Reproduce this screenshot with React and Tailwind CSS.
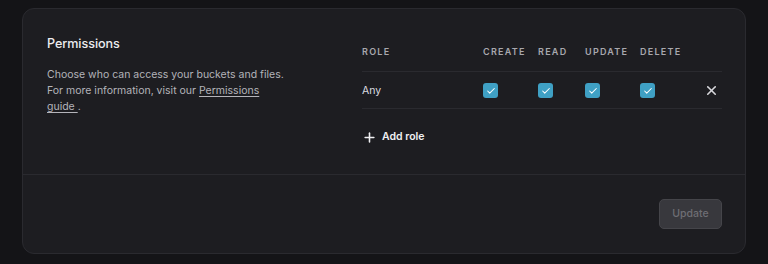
import { Plus, X, Check } from 'lucide-react'

const cols = ['CREATE', 'READ', 'UPDATE', 'DELETE']

function Box() {
  return (
    <span className="flex h-[15px] w-[15px] items-center justify-center rounded-[3px] bg-[#3fa0c4]">
      <Check size={10} strokeWidth={2.5} className="text-white" />
    </span>
  )
}

export default function App() {
  return (
    <div className="h-[264px] w-[768px] bg-[#141417] px-[22px] pt-[8px] font-['Inter',sans-serif]">
      <div className="flex h-[246px] flex-col rounded-[12px] border border-[#2a2a2f] bg-[#1d1d21]">
        <div className="flex flex-1 gap-6 border-b border-[#2a2a2f] pl-[24px] pr-[23px] pt-[23px]">
          <div className="w-[291px] pt-[2px]">
            <h2 className="text-[12.6px] font-medium leading-5 tracking-[-0.005em] text-[#ececef]">Permissions</h2>
            <p className="mt-[13px] max-w-[238px] text-[10.5px] leading-4 text-[#b4b4ba]">
              Choose who can access your buckets and files.
              <br />
              For more information, visit our{' '}
              <span className="underline underline-offset-2">Permissions</span>{' '}
              <span className="underline underline-offset-2">guide&nbsp;</span>.
            </p>
          </div>
          <div className="flex-1">
            <div className="grid h-[40px] grid-cols-[121px_55px_47px_55px_1fr_20px] items-center border-b border-[#2a2a2f] pt-[1px] text-[9px] font-semibold tracking-[0.14em] text-[#a8a8ae]">
              <span>ROLE</span>
              {cols.map(c => <span key={c}>{c}</span>)}
              <span />
            </div>
            <div className="grid h-[37px] grid-cols-[121px_55px_47px_55px_1fr_20px] items-center border-b border-[#2a2a2f] pt-[1px] text-[10.5px] text-[#dcdce0]">
              <span>Any</span>
              {cols.map(c => <Box key={c} />)}
              <X size={15} strokeWidth={2.5} className="ml-[2px] text-[#d8d8dc]" />
            </div>
            <div className="flex h-[54px] items-center gap-[5px] pt-[2px] text-[10.5px] font-semibold text-[#f0f0f2]">
              <Plus size={15} strokeWidth={2.5} />
              <span>Add role</span>
            </div>
          </div>
        </div>
        <div className="flex h-[78px] items-center justify-end pr-[23px]">
          <button className="h-[30px] w-[63px] rounded-[5px] border border-[#45454a] bg-[#38383d] text-[10.5px] font-medium text-[#6e6e74]">
            Update
          </button>
        </div>
      </div>
    </div>
  )
}
